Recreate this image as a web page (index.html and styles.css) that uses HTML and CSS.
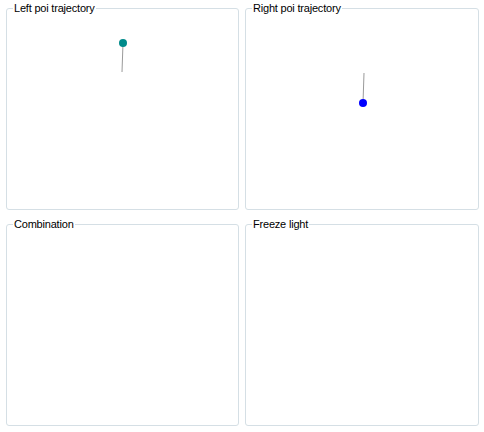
FILE: index.html
```html
<!DOCTYPE html>
<html>
<head>
<meta charset="utf-8">
<link rel="stylesheet" href="styles.css">
</head>
<body>
<div class="layout">
  <div class="group">
    <span class="title">Left poi trajectory</span>
    <svg class="canvas" viewBox="0 0 231 200">
      <line x1="116" y1="34" x2="115" y2="63" class="trail"/>
      <circle cx="116" cy="34" r="4" fill="#008b8b"/>
    </svg>
  </div>
  <div class="group">
    <span class="title">Right poi trajectory</span>
    <svg class="canvas" viewBox="0 0 232 200">
      <line x1="118" y1="64" x2="117" y2="94" class="trail"/>
      <circle cx="117" cy="94" r="4" fill="#0000ff"/>
    </svg>
  </div>
  <div class="group">
    <span class="title">Combination</span>
  </div>
  <div class="group">
    <span class="title">Freeze light</span>
  </div>
</div>
</body>
</html>
```

FILE: styles.css
```css
html, body {
  margin: 0;
  padding: 0;
  background: #ffffff;
}
body {
  width: 484px;
  height: 432px;
  overflow: hidden;
  font-family: "Liberation Sans", Arial, sans-serif;
  font-size: 11px;
  color: #000000;
}
.layout {
  display: grid;
  grid-template-columns: 233px 234px;
  grid-template-rows: 202px 202px;
  column-gap: 6px;
  row-gap: 14px;
  padding: 8px 0 0 6px;
}
.group {
  position: relative;
  border: 1px solid #d5dfe5;
  border-radius: 3px;
  box-sizing: border-box;
}
.title {
  position: absolute;
  top: -7px;
  left: 6px;
  padding: 0 1px;
  line-height: 13px;
  letter-spacing: -0.2px;
  background: #ffffff;
  white-space: nowrap;
}
.canvas {
  display: block;
  width: 100%;
  height: 100%;
}
.trail {
  stroke: #9a9a9a;
  stroke-width: 1;
}
```
